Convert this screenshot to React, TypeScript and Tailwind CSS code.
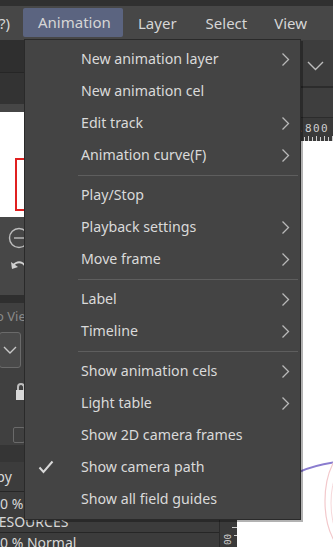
import React from "react";

const Chevron = () => (
  <svg width="9" height="15" viewBox="0 0 9 15" className="shrink-0">
    <path d="M1.5 1.5 L7.5 7.5 L1.5 13.5" fill="none" stroke="#b9b9b9" strokeWidth="1.3" />
  </svg>
);

type Item = { label: string; sub?: boolean; check?: boolean } | "sep";

const items: Item[] = [
  { label: "New animation layer", sub: true },
  { label: "New animation cel" },
  { label: "Edit track", sub: true },
  { label: "Animation curve(F)", sub: true },
  "sep",
  { label: "Play/Stop" },
  { label: "Playback settings", sub: true },
  { label: "Move frame", sub: true },
  "sep",
  { label: "Label", sub: true },
  { label: "Timeline", sub: true },
  "sep",
  { label: "Show animation cels", sub: true },
  { label: "Light table", sub: true },
  { label: "Show 2D camera frames" },
  { label: "Show camera path", check: true },
  { label: "Show all field guides" },
];

export default function App() {
  const font = { fontFamily: '"Segoe UI", "Noto Sans", "Open Sans", sans-serif' };
  const mono = { fontFamily: '"DejaVu Sans Mono", monospace' };
  return (
    <div className="relative w-[333px] h-[547px] overflow-hidden bg-[#3b3b3b] flex flex-col" style={font}>
      <div className="h-[6px] shrink-0 bg-[#303030]" />
      {/* menubar */}
      <div className="h-[34px] shrink-0 bg-[#474747] flex items-center text-[15px] text-[#d6d6d6] whitespace-nowrap">
        <div className="w-[24px] -ml-[1px]">?)</div>
        <div className="w-[100px] h-[29px] mt-[-1px] bg-[#5b6480] rounded-[2px] flex items-center pl-[15px]">Animation</div>
        <div className="ml-[15px]">Layer</div>
        <div className="ml-[29px]">Select</div>
        <div className="ml-[27px]">View</div>
      </div>
      {/* body */}
      <div className="flex flex-1 min-h-0">
        {/* left panel */}
        <div className="w-[220px] shrink-0 flex flex-col border-r border-[#2a2a2a] whitespace-nowrap overflow-hidden">
          <div className="h-[33px] shrink-0 bg-[#2f2f2f] border-b border-[#262626]" />
          <div className="h-[31px] shrink-0 bg-[#333333]" />
          <div className="h-[8px] shrink-0 bg-[#464646]" />
          <div className="h-[105px] shrink-0 bg-white relative">
            <div className="absolute left-[15px] top-[46px] w-[120px] h-[53px] border-2 border-[#e02020]" />
          </div>
          <div className="h-[78px] shrink-0 bg-[#474747] flex flex-col items-start pl-[8px] pt-[10px] gap-[10px]">
            <svg width="22" height="22" viewBox="0 0 22 22">
              <circle cx="11" cy="11" r="9.5" fill="none" stroke="#bdbdbd" strokeWidth="1.4" />
              <path d="M6 11 H16" stroke="#bdbdbd" strokeWidth="1.4" />
            </svg>
            <svg width="22" height="18" viewBox="0 0 22 18">
              <path d="M18 10 A7 7 0 0 0 8 4 L5 6" fill="none" stroke="#d0d0d0" strokeWidth="1.8" />
              <path d="M3 3 L4 10 L10 8 Z" fill="#d0d0d0" />
            </svg>
          </div>
          <div className="h-[8px] shrink-0 bg-[#2f2f2f]" />
          <div className="h-[27px] shrink-0 bg-[#404040] text-[13px] text-[#8a8a8a] flex items-center -ml-[4px]">o View</div>
          <div className="h-[40px] shrink-0 bg-[#404040] pt-[2px]">
            <div className="w-[22px] h-[36px] ml-[-1px] border border-[#6a6a6a] rounded-[3px] bg-[#4a4a4a] flex items-center justify-center">
              <svg width="14" height="9" viewBox="0 0 14 9"><path d="M1 1 L7 7 L13 1" fill="none" stroke="#c8c8c8" strokeWidth="1.4" /></svg>
            </div>
          </div>
          <div className="h-[75px] shrink-0 bg-[#404040] relative">
            <div className="absolute left-[17px] top-[13px] w-[8px] h-[7px] border-2 border-b-0 border-[#bdbdbd] rounded-t-[4px]" />
            <div className="absolute left-[16px] top-[20px] w-[10px] h-[10px] bg-[#d8d8d8]" />
            <div className="absolute left-[13px] top-[57px] w-[12px] h-[16px] border border-[#6a6a6a] rounded-[2px]" />
          </div>
          <div className="h-[17px] shrink-0 bg-[#353535]" />
          <div className="h-[30px] shrink-0 bg-[#3c3c3c] text-[14px] text-[#d8d8d8] flex items-center border-b border-[#262626]">
            <span className="-ml-[21px]">Copy</span>
          </div>
          <div className="h-[41px] shrink-0 bg-[#3c3c3c] text-[14px] leading-[18px] text-[#d8d8d8] flex flex-col justify-center border-b border-[#262626]">
            <span className="-ml-[16px] mt-[2px]">100 %</span>
            <span className="-ml-[10px]">RESOURCES</span>
          </div>
          <div className="flex-1 bg-[#3c3c3c] text-[14px] text-[#d8d8d8] leading-[17px] pt-[1px]">
            <span className="-ml-[16px] inline-block">100 % Normal</span>
          </div>
        </div>
        {/* main */}
        <div className="flex-1 flex flex-col min-w-0">
          <div className="h-[48px] shrink-0 bg-[#3d3d3d] flex items-center justify-end pr-[9px] pt-[5px] border-b-2 border-[#2c2c2c]">
            <svg width="17" height="10" viewBox="0 0 17 10"><path d="M1 1 L8.5 8.5 L16 1" fill="none" stroke="#bcbcbc" strokeWidth="1.4" /></svg>
          </div>
          <div className="h-[30px] shrink-0 bg-[#3e3e3e] border-b border-[#2c2c2c]" />
          <div className="h-[23px] shrink-0 bg-[#3a3a3a] relative">
            <div className="absolute left-[77px] top-[3px] text-[11px] tracking-[1.4px] text-[#cfcfcf]" style={mono}>.800</div>
            <svg className="absolute left-[79px] bottom-0" width="40" height="5" viewBox="0 0 40 5">
              {[0, 4, 8, 12, 16, 20, 24, 28, 32].map((x, i) => (
                <path key={i} d={`M${x + 1.5} ${i % 2 ? 1 : 0} V5`} stroke="#cfcfcf" strokeWidth="1" />
              ))}
            </svg>
          </div>
          <div className="flex-1 flex min-h-0">
            <div className="w-[17px] shrink-0 bg-[#3a3a3a] relative">
              <div className="absolute right-0 bottom-0 top-0 w-[5px]">
                <svg width="5" height="406" viewBox="0 0 5 406">
                  {Array.from({ length: 50 }).map((_, i) => (
                    <path key={i} d={`M${i % 2 ? 2 : 0} ${i * 8 + 2.5} H5`} stroke="#cfcfcf" strokeWidth="1" />
                  ))}
                </svg>
              </div>
              <div className="absolute left-[2px] bottom-[2px] text-[9px] leading-[9px] text-[#cfcfcf] [writing-mode:vertical-rl]" style={mono}>00</div>
            </div>
            <div className="flex-1 bg-white relative">
              <svg className="absolute inset-0" width="96" height="407" viewBox="0 0 96 407">
                <path d="M62 331 Q78 324 100 321" fill="none" stroke="#8a7ccf" strokeWidth="2" />
                <ellipse cx="114" cy="360" rx="26" ry="52" fill="none" stroke="#f3c9cc" strokeWidth="1.2" />
                <ellipse cx="116" cy="362" rx="22" ry="46" fill="none" stroke="#f6d8da" strokeWidth="1" />
              </svg>
            </div>
          </div>
        </div>
      </div>

      {/* dropdown menu */}
      <div className="absolute left-[24px] top-[39px] w-[277px] h-[481px] bg-[#444444] border border-[#2a2a2a] shadow-[2px_2px_0_rgba(0,0,0,0.3)] pt-[3px] text-[14.2px] text-[#dadada] whitespace-nowrap">
        {items.map((it, i) =>
          it === "sep" ? (
            <div key={i} className="h-[8px] flex items-center pl-[53px] pr-[2px]">
              <div className="h-px w-full bg-[#5e5e5e]" />
            </div>
          ) : (
            <div key={i} className="h-[32px] flex items-center pl-[56px] pr-[10px] relative">
              {it.check && (
                <svg className="absolute left-[13px] top-[9px]" width="16" height="14" viewBox="0 0 16 14">
                  <path d="M1.5 7.5 L5.5 12 L14.5 1.5" fill="none" stroke="#d8d8d8" strokeWidth="2" />
                </svg>
              )}
              <span className="flex-1">{it.label}</span>
              {it.sub && <Chevron />}
            </div>
          )
        )}
      </div>
    </div>
  );
}
